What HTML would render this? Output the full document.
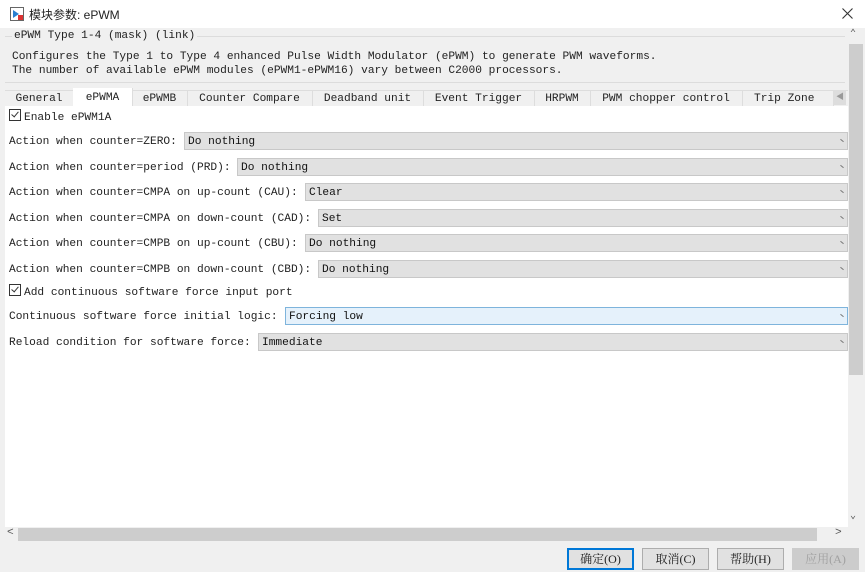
<!DOCTYPE html>
<html><head><meta charset="utf-8"><style>
body{margin:0;width:865px;height:572px;overflow:hidden;background:#f0f0f0;position:relative;font-family:"Liberation Mono","Noto Sans CJK SC",monospace;font-size:11.2px;color:#222}
.a{position:absolute;white-space:nowrap}
.dd{position:absolute;height:18px;background:#e1e1e1;border:1px solid #c8c8c8;box-sizing:border-box;right:17px;line-height:18px;padding-left:3px;color:#111}
.dd:after{content:"";position:absolute;right:3px;top:7px;width:4px;height:1px;background:#777;transform:rotate(40deg)}
.lb{position:absolute;left:9px;line-height:22px}
.cb{display:inline-block;width:10px;height:10px;border:1px solid #333;background:#fff;vertical-align:-1px;margin-right:3px;position:relative}
.cb:after{content:"";position:absolute;left:3px;top:0px;width:3px;height:6px;border:solid #333;border-width:0 1px 1px 0;transform:rotate(40deg)}
.tab{position:absolute;top:90px;height:16px;line-height:18px;border-right:1px solid #ddd;text-align:center}
.btn{position:absolute;top:548px;height:22px;width:67px;border:1px solid #adadad;background:#e1e1e1;box-sizing:border-box;text-align:center;line-height:20px;font-family:"Liberation Serif","Noto Serif CJK SC",serif;font-size:12px}
</style></head><body>
<div class="a" style="left:0;top:0;width:865px;height:28px;background:#fff"></div>
<svg class="a" style="left:10px;top:7px" width="14" height="14"><rect x="0.5" y="0.5" width="13" height="13" fill="#fff" stroke="#666"/><path d="M3 3l6 4-6 4z" fill="#2a7fd0"/><rect x="8" y="8" width="5" height="5" fill="#d33"/></svg>
<div class="a" style="left:29px;top:6px;font-family:'Liberation Sans','Noto Sans CJK SC',sans-serif;font-size:12px">模块参数: ePWM</div>
<svg class="a" style="left:842px;top:8px" width="11" height="11"><path d="M0.5 0.5L10.5 10.5M10.5 0.5L0.5 10.5" stroke="#333" stroke-width="1.1"/></svg>
<div class="a" style="left:5px;top:36px;width:840px;height:46px;border-top:1px solid #dcdcdc"></div>
<div class="a" style="left:12px;top:30px;background:#f0f0f0;padding:0 2px">ePWM Type 1-4 (mask) (link)</div>
<div class="a" style="left:12px;top:50px;line-height:14px">Configures the Type 1 to Type 4 enhanced Pulse Width Modulator (ePWM) to generate PWM waveforms.<br>The number of available ePWM modules (ePWM1-ePWM16) vary between C2000 processors.</div>
<div class="a" style="left:5px;top:82px;width:840px;border-top:1px solid #dcdcdc"></div>
<div class="a" style="left:5px;top:90px;width:843px;height:16px;background:#f0f0f0;border-top:1px solid #ddd"></div>
<div class="tab" style="left:5px;width:68px">General</div>
<div class="tab" style="left:73px;width:59px;background:#fff;top:88px;height:18px;line-height:21px">ePWMA</div>
<div class="tab" style="left:132px;width:55px">ePWMB</div>
<div class="tab" style="left:187px;width:125px">Counter Compare</div>
<div class="tab" style="left:312px;width:111px">Deadband unit</div>
<div class="tab" style="left:423px;width:111px">Event Trigger</div>
<div class="tab" style="left:534px;width:56px">HRPWM</div>
<div class="tab" style="left:590px;width:152px">PWM chopper control</div>
<div class="tab" style="left:742px;width:92px;text-align:left;padding-left:12px;box-sizing:border-box;overflow:hidden">Trip Zone unit</div>
<div class="a" style="left:834px;top:91px;width:12px;height:14px;background:#ddd;color:#999;font-size:8px;line-height:14px;text-align:center">◀</div>
<div class="a" style="left:5px;top:106px;width:843px;height:421px;background:#fff"></div>
<div class="lb" style="top:107px"><span class="cb"></span>Enable ePWM1A</div>
<div class="lb" style="top:131px">Action when counter=ZERO:</div><div class="dd" style="left:184px;top:132px">Do nothing</div>
<div class="lb" style="top:157px">Action when counter=period (PRD):</div><div class="dd" style="left:237px;top:158px">Do nothing</div>
<div class="lb" style="top:182px">Action when counter=CMPA on up-count (CAU):</div><div class="dd" style="left:305px;top:183px">Clear</div>
<div class="lb" style="top:208px">Action when counter=CMPA on down-count (CAD):</div><div class="dd" style="left:318px;top:209px">Set</div>
<div class="lb" style="top:233px">Action when counter=CMPB on up-count (CBU):</div><div class="dd" style="left:305px;top:234px">Do nothing</div>
<div class="lb" style="top:259px">Action when counter=CMPB on down-count (CBD):</div><div class="dd" style="left:318px;top:260px">Do nothing</div>
<div class="lb" style="top:282px"><span class="cb"></span>Add continuous software force input port</div>
<div class="lb" style="top:306px">Continuous software force initial logic:</div><div class="dd" style="left:285px;top:307px;background:#e5f1fb;border-color:#7eb4dc">Forcing low</div>
<div class="lb" style="top:332px">Reload condition for software force:</div><div class="dd" style="left:258px;top:333px">Immediate</div>
<div class="a" style="left:848px;top:28px;width:15px;height:499px;background:#f0f0f0"></div>
<div class="a" style="left:849px;top:44px;width:14px;height:331px;background:#cdcdcd"></div>
<div class="a" style="left:850px;top:28px;font-size:10px;color:#555">⌃</div>
<div class="a" style="left:850px;top:510px;font-size:10px;color:#555">⌄</div>
<div class="a" style="left:5px;top:527px;width:843px;height:15px;background:#f0f0f0"></div>
<div class="a" style="left:18px;top:528px;width:799px;height:13px;background:#cdcdcd"></div>
<div class="a" style="left:7px;top:527px;color:#555">&lt;</div>
<div class="a" style="left:835px;top:527px;color:#555">&gt;</div>
<div class="btn" style="left:567px;border:2px solid #0078d7;line-height:18px">确定(O)</div>
<div class="btn" style="left:642px">取消(C)</div>
<div class="btn" style="left:717px">帮助(H)</div>
<div class="btn" style="left:792px;color:#a0a0a0;border-color:#ccc;background:#ccc">应用(A)</div>
</body></html>
